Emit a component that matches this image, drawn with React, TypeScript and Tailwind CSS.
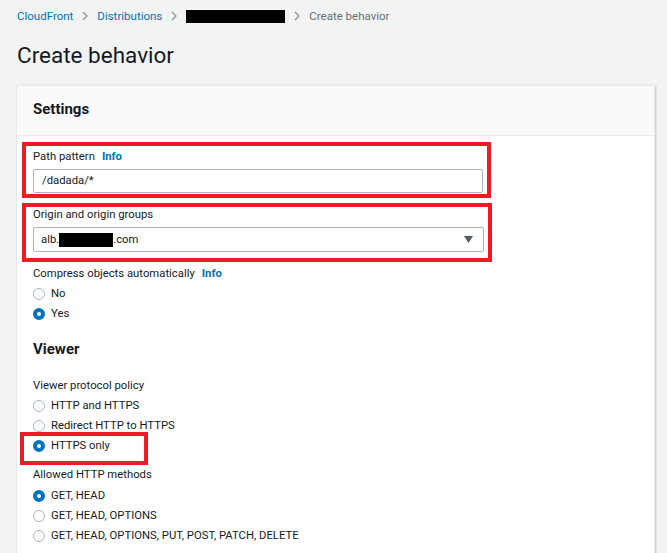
import React from "react";

const Chevron = () => (
  <svg width="8" height="10" viewBox="0 0 8 10" className="mx-[8px]">
    <polyline points="2,1 6,5 2,9" fill="none" stroke="#879596" strokeWidth="1.2" />
  </svg>
);

function Radio({ label, checked }: { label: string; checked?: boolean }) {
  return (
    <div className="flex h-[20px] items-center gap-[6px]">
      <span
        className={
          checked
            ? "h-[12px] w-[12px] rounded-full border-[4px] border-[#0073bb] bg-white"
            : "h-[12px] w-[12px] rounded-full border border-[#aab7b8] bg-white"
        }
      />
      <span className="text-[#16191f]">{label}</span>
    </div>
  );
}

const Info = () => <span className="ml-[7px] font-bold text-[#0073bb]">Info</span>;

export default function App() {
  return (
    <div className="min-h-screen bg-[#f2f3f3] font-['Roboto',sans-serif] text-[11.3px] leading-[16px] text-[#16191f]">
      {/* Breadcrumbs */}
      <nav className="flex h-[32px] items-center px-[17px] text-[11.5px]">
        <span className="text-[#0073bb]">CloudFront</span>
        <Chevron />
        <span className="text-[#0073bb]">Distributions</span>
        <Chevron />
        <span className="h-[13px] w-[99px] bg-black" />
        <Chevron />
        <span className="text-[#687078]">Create behavior</span>
      </nav>

      <h1 className="mt-[8px] px-[17px] text-[22.5px] leading-[30px] text-[#16191f]">Create behavior</h1>

      {/* Settings card */}
      <div className="ml-[16px] mr-[12px] mt-[15px] min-h-[480px] border border-[#e6e9e9] bg-white shadow-[1px_1px_2px_rgba(0,28,36,0.2)]">
        <div className="flex h-[50px] items-center border-b border-[#eaeded] bg-[#fafafa] px-[16px] pb-[3px] text-[15px] font-bold">
          Settings
        </div>

        <div className="px-[16px] pt-[6px] pb-[20px]">
          <div className="-ml-[11px] w-[469px] border-4 border-[#ed1c24] pl-[7px] pr-[4px] pt-[3px] pb-[1px]">
            <div>
              Path pattern
              <Info />
            </div>
            <div className="mt-[4px] flex h-[24px] items-center rounded-[2px] border border-[#aab7b8] px-[8px]">
              /dadada/*
            </div>
          </div>

          <div className="-ml-[11px] mt-[5px] w-[470px] border-4 border-[#ed1c24] pl-[7px] pr-[4px] pb-[6px]">
            <div>Origin and origin groups</div>
            <div className="mt-[4px] flex h-[25px] items-center rounded-[2px] border border-[#aab7b8] pl-[7px] pr-[10px]">
              <span>alb.</span>
              <span className="h-[14px] w-[54px] bg-black" />
              <span>.com</span>
              <svg width="9" height="7" viewBox="0 0 9 7" className="ml-auto">
                <polygon points="0,0 9,0 4.5,7" fill="#545b64" />
              </svg>
            </div>
          </div>

          <div className="mt-[4px]">
            Compress objects automatically
            <Info />
          </div>
          <div className="mt-[2px]">
            <Radio label="No" />
            <Radio label="Yes" checked />
          </div>

          <h2 className="mt-[15px] text-[15px] font-bold leading-[20px]">Viewer</h2>

          <div className="mt-[19px]">Viewer protocol policy</div>
          <div className="mt-[2px]">
            <Radio label="HTTP and HTTPS" />
            <Radio label="Redirect HTTP to HTTPS" />
            <div className="-mb-[9px] -ml-[13px] -mt-[4px] w-[128px] border-4 border-[#ed1c24] pl-[9px] pb-[5px]">
              <Radio label="HTTPS only" checked />
            </div>
          </div>

          <div className="mt-[11px]">Allowed HTTP methods</div>
          <div className="mt-[3px]">
            <Radio label="GET, HEAD" checked />
            <Radio label="GET, HEAD, OPTIONS" />
            <Radio label="GET, HEAD, OPTIONS, PUT, POST, PATCH, DELETE" />
          </div>
        </div>
      </div>
    </div>
  );
}
